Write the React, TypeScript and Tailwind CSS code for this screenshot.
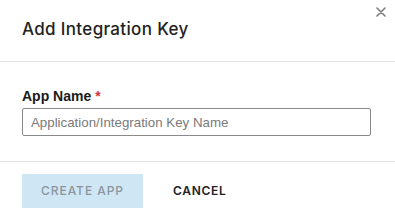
import React from 'react';

const App: React.FC = () => {
  return (
    <div className="relative w-[395px] h-[219px] bg-white overflow-hidden">
      <button className="absolute right-[9px] top-[7px] w-[10px] h-[10px] flex items-center justify-center text-[#7a7a7a]">
        <svg width="10" height="10" viewBox="0 0 10 10">
          <path d="M1 1 L9 9 M9 1 L1 9" stroke="currentColor" strokeWidth="1.6" strokeLinecap="round" />
        </svg>
      </button>

      <div className="h-[62px] border-b border-[#e4e4e4] px-[22px] pt-[19px]">
        <h2 className="font-['Inter',sans-serif] font-medium text-[17px] tracking-[0.02em] leading-[20px] text-[#222]">
          Add Integration Key
        </h2>
      </div>

      <div className="px-[22px] pt-[26px] pb-[25px] border-b border-[#e4e4e4]">
        <label className="block font-['Liberation_Sans',Arial,sans-serif] font-bold text-[14px] leading-[16px] text-[#1a1a1a] mb-[4px]">
          App Name <span className="text-[#d0373d]">*</span>
        </label>
        <input
          className="block w-[349px] h-[28px] border border-[#8a8a8a] rounded-[2px] px-[8px] font-['Liberation_Sans',Arial,sans-serif] text-[13.3px] text-[#333] placeholder:text-[#7a7a7a] outline-none"
          placeholder="Application/Integration Key Name"
        />
      </div>

      <div className="flex items-center px-[22px] pt-[12px]">
        <button className="w-[121px] h-[34px] bg-[#cfe6f5] font-['Inter',sans-serif] font-medium text-[12px] tracking-[0.08em] text-[#8a949c]">
          CREATE APP
        </button>
        <button className="ml-[30px] font-['Inter',sans-serif] font-semibold text-[12px] tracking-[0.06em] text-[#222]">
          CANCEL
        </button>
      </div>
    </div>
  );
};

export default App;
